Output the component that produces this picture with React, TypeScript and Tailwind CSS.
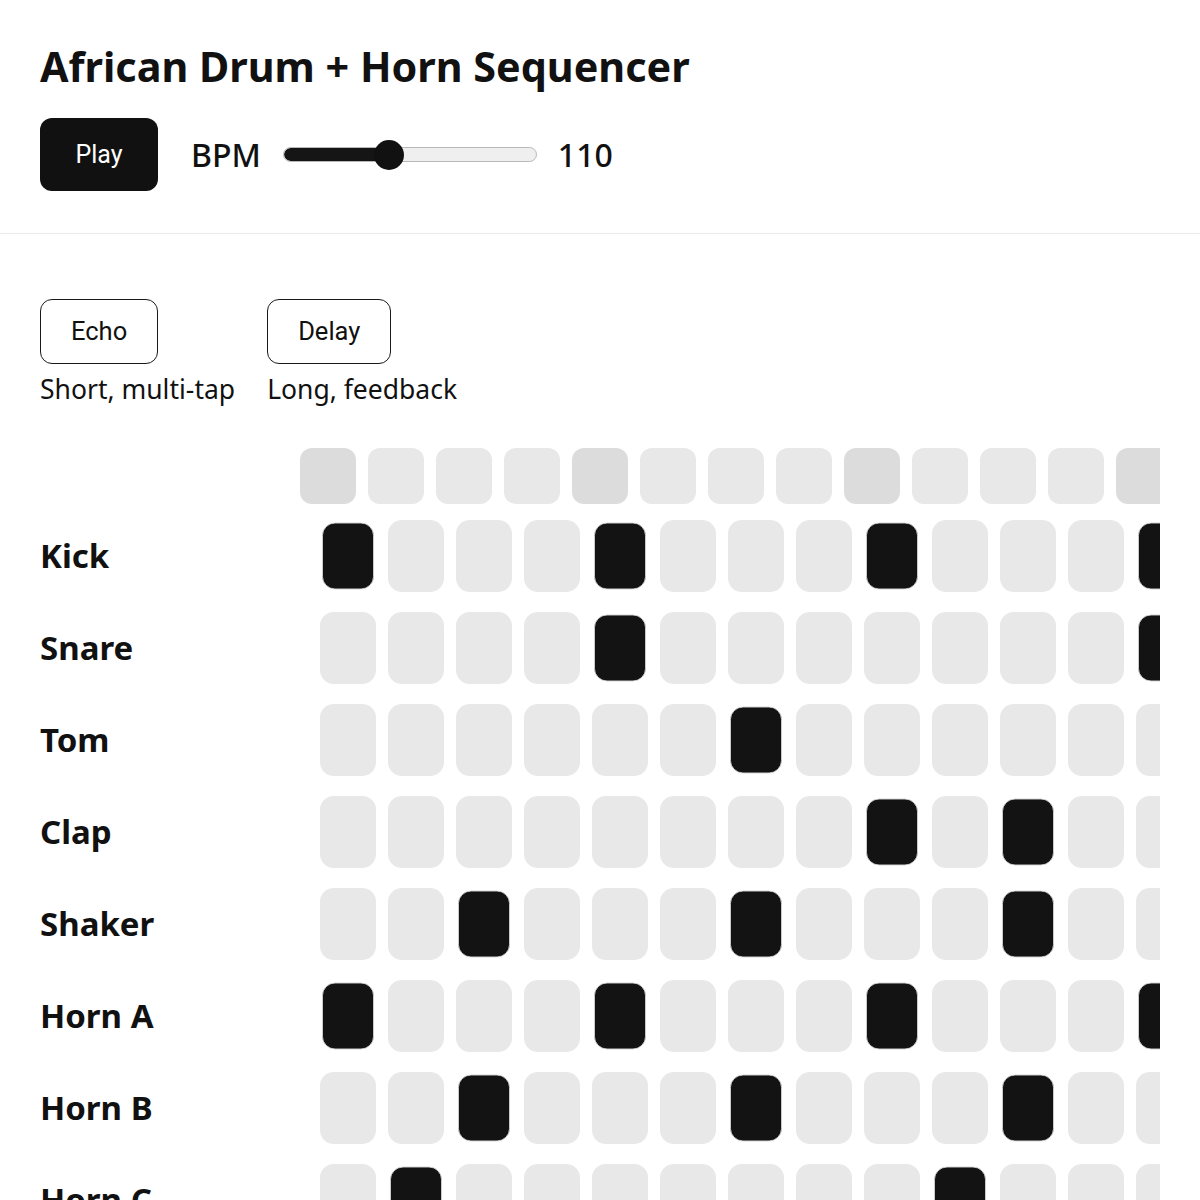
import React from 'react';

const STEPS = 16;

const tracks: { name: string; on: number[] }[] = [
  { name: 'Kick', on: [0, 4, 8, 12] },
  { name: 'Snare', on: [4, 12] },
  { name: 'Tom', on: [6, 14] },
  { name: 'Clap', on: [8, 10] },
  { name: 'Shaker', on: [2, 6, 10, 14] },
  { name: 'Horn A', on: [0, 4, 8, 12] },
  { name: 'Horn B', on: [2, 6, 10, 14] },
  { name: 'Horn C', on: [1, 9] },
];

const effects = [
  { name: 'Echo', desc: 'Short, multi-tap' },
  { name: 'Delay', desc: 'Long, feedback' },
];

const sans = "font-['Noto_Sans','Open_Sans',sans-serif]";
const roboto = "font-['Roboto','Noto_Sans',sans-serif]";

const BpmSlider: React.FC<{ value: number; min: number; max: number }> = ({ value, min, max }) => {
  const pct = ((value - min) / (max - min)) * 100;
  return (
    <div className="relative w-[254px] h-[30px] flex items-center">
      <div className="w-full h-[15px] rounded-full bg-[#efefef] border border-[#b8b8b8] overflow-hidden">
        <div className="h-full bg-[#151515] rounded-full" style={{ width: `${pct}%` }} />
      </div>
      {/* thumb */}
      <div
        className="absolute top-0 w-[30px] h-[30px] rounded-full bg-[#111] -translate-x-1/2"
        style={{ left: `${pct}%` }}
      />
    </div>
  );
};

export default function App() {
  return (
    <div className={`min-h-screen bg-white text-[#111] ${sans}`}>
      {/* Header */}
      <header className="px-10 pt-[42px] pb-[42px] border-b border-[#ebebeb]">
        <h1 className="text-[41.3px] leading-[48px] font-bold">African Drum + Horn Sequencer</h1>
        <div className="mt-[28px] flex items-center">
          <button className={`w-[118px] h-[73px] rounded-[12px] bg-[#111] text-white text-[25px] ${roboto}`}>
            Play
          </button>
          <span className="ml-[33px] text-[32px] leading-[40px] font-medium">BPM</span>
          <div className="ml-[22px]">
            <BpmSlider value={110} min={60} max={180} />
          </div>
          <span className="ml-[21px] text-[32px] leading-[40px] font-medium">110</span>
        </div>
      </header>

      <main className="px-10 pt-[65px]">
        {/* Effects */}
        <div className="flex gap-8">
          {effects.map((fx) => (
            <div key={fx.name} className="flex flex-col items-start">
              <button
                className={`h-[65px] px-[30px] rounded-[12px] border-[1.5px] border-[#1a1a1a] bg-white text-[25.5px] text-[#111] ${roboto}`}
              >
                {fx.name}
              </button>
              <span className="mt-[8px] text-[26.5px] leading-[34px] text-[#111]">{fx.desc}</span>
            </div>
          ))}
        </div>

        {/* Sequencer */}
        <div className="mt-[42px] overflow-hidden">
          <div className="flex gap-3 pl-[260px]">
            {Array.from({ length: STEPS }).map((_, i) => (
              <div
                key={i}
                className={`shrink-0 w-[56px] h-[56px] rounded-[12px] ${i % 4 === 0 ? 'bg-[#dcdcdc]' : 'bg-[#e8e8e8]'}`}
              />
            ))}
          </div>

          <div className="mt-4 flex flex-col gap-5">
            {tracks.map((t) => (
              <div key={t.name} className="flex items-center">
                <div className="w-[280px] shrink-0 text-[33px] leading-[44px] font-bold">{t.name}</div>
                <div className="flex gap-3">
                  {Array.from({ length: STEPS }).map((_, i) => {
                    const on = t.on.includes(i);
                    return (
                      <button
                        key={i}
                        className={`shrink-0 w-[56px] h-[72px] rounded-[14px] ${
                          on ? 'bg-[#131313] border border-[#d8d8d8] scale-[0.93]' : 'bg-[#e8e8e8]'
                        }`}
                      />
                    );
                  })}
                </div>
              </div>
            ))}
          </div>
        </div>
      </main>
    </div>
  );
}
